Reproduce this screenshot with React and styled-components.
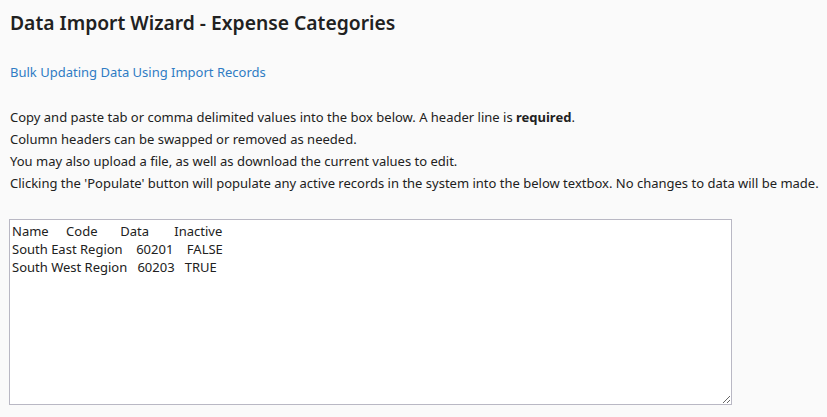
import styled, { createGlobalStyle } from "styled-components";

const GlobalStyle = createGlobalStyle`
  body {
    margin: 0;
    background: #fafafa;
    font-family: "Noto Sans", "Open Sans", sans-serif;
    color: #212121;
  }
`;

const Page = styled.div`
  padding: 10px 0 0 10px;
`;

const Title = styled.h1`
  margin: 0;
  font-size: 19.3px;
  font-weight: 600;
  line-height: 26px;
  color: #212121;
`;

const HelpLink = styled.a`
  display: block;
  margin-top: 27px;
  font-size: 13px;
  line-height: 18px;
  color: #2f7cc4;
  text-decoration: none;
`;

const Instructions = styled.div`
  margin-top: 25px;
  font-size: 13px;
  line-height: 22px;
`;

const Line = styled.p`
  margin: 0;
  white-space: nowrap;
`;

const DataBox = styled.textarea`
  display: block;
  box-sizing: border-box;
  margin: 25px 0 0 -1px;
  width: 723px;
  height: 186px;
  padding: 2px;
  border: 1px solid #b9b8c4;
  background: #fff;
  font-family: "Noto Sans", "Open Sans", sans-serif;
  font-size: 13px;
  line-height: 18px;
  color: #212121;
  tab-size: 8;
  outline: none;
`;

const sample =
  "Name\tCode\tData\tInactive\nSouth East Region    60201    FALSE\nSouth West Region   60203   TRUE";

export default function App() {
  return (
    <>
      <GlobalStyle />
      <Page>
        <Title>Data Import Wizard - Expense Categories</Title>
        <HelpLink href="#">Bulk Updating Data Using Import Records</HelpLink>
        <Instructions>
          <Line>
            Copy and paste tab or comma delimited values into the box below. A header line is{" "}
            <b>required</b>.
          </Line>
          <Line>Column headers can be swapped or removed as needed.</Line>
          <Line>You may also upload a file, as well as download the current values to edit.</Line>
          <Line>
            Clicking the 'Populate' button will populate any active records in the system into the
            below textbox. No changes to data will be made.
          </Line>
        </Instructions>
        <DataBox defaultValue={sample} spellCheck={false} />
      </Page>
    </>
  );
}
